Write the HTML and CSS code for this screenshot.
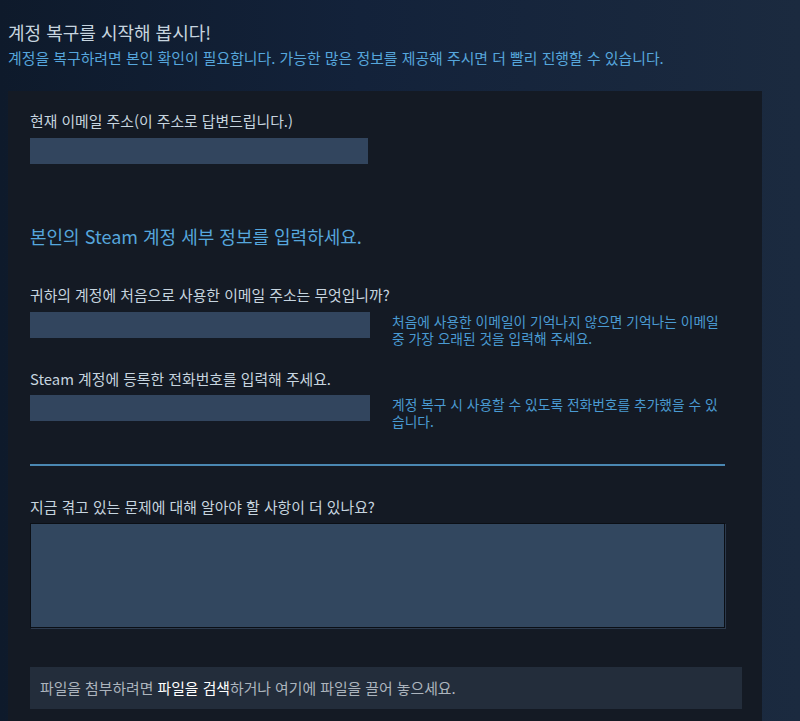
FILE: index.html
```html
<!DOCTYPE html>
<html lang="ko">
<head>
<meta charset="utf-8">
<title>계정 복구</title>
<link rel="stylesheet" href="styles.css">
</head>
<body>
<div class="page">
  <h1 class="title">계정 복구를 시작해 봅시다!</h1>
  <p class="subtitle">계정을 복구하려면 본인 확인이 필요합니다. 가능한 많은 정보를 제공해 주시면 더 빨리 진행할 수 있습니다.</p>

  <div class="panel">
    <div class="field">
      <label class="label" for="email">현재 이메일 주소(이 주소로 답변드립니다.)</label>
      <input class="input input-short" id="email" type="text">
    </div>

    <h2 class="section">본인의 Steam 계정 세부 정보를 입력하세요.</h2>

    <div class="field field-first">
      <label class="label" for="first">귀하의 계정에 처음으로 사용한 이메일 주소는 무엇입니까?</label>
      <div class="row">
        <input class="input" id="first" type="text">
        <p class="hint">처음에 사용한 이메일이 기억나지 않으면 기억나는 이메일 중 가장 오래된 것을 입력해 주세요.</p>
      </div>
    </div>

    <div class="field field-phone">
      <label class="label" for="phone">Steam 계정에 등록한 전화번호를 입력해 주세요.</label>
      <div class="row">
        <input class="input" id="phone" type="text">
        <p class="hint">계정 복구 시 사용할 수 있도록 전화번호를 추가했을 수 있습니다.</p>
      </div>
    </div>

    <div class="divider"></div>

    <div class="field field-more">
      <label class="label" for="more">지금 겪고 있는 문제에 대해 알아야 할 사항이 더 있나요?</label>
      <textarea class="textarea" id="more"></textarea>
    </div>

    <div class="dropzone">파일을 첨부하려면 <span class="browse">파일을 검색</span>하거나 여기에 파일을 끌어 놓으세요.</div>
  </div>
</div>
</body>
</html>
```

FILE: styles.css
```css
* {
  box-sizing: border-box;
}

html, body {
  margin: 0;
  padding: 0;
  height: 100%;
}

body {
  font-family: "Noto Sans CJK KR", "Noto Sans", sans-serif;
  background: linear-gradient(90deg, #0e1a2b 0%, #13223a 45%, #1b2a3f 100%);
  overflow: hidden;
}

.page {
  padding: 20px 0 0 8px;
}

.title {
  margin: 0;
  font-size: 18px;
  line-height: 24px;
  font-weight: 400;
  color: #c6d4df;
}

.subtitle {
  margin: 4px 0 0;
  font-size: 14.9px;
  line-height: 20px;
  color: #56a6dc;
}

.panel {
  margin-top: 23px;
  width: 754px;
  min-height: 640px;
  background: #141a24;
  padding: 21px 20px 0 22px;
}

.field {
  display: flex;
  flex-direction: column;
  gap: 8px;
}

.label {
  font-size: 14.85px;
  line-height: 18px;
  color: #c6d4df;
}

.input {
  display: block;
  width: 340px;
  height: 26px;
  margin: 0;
  padding: 0 6px;
  border: none;
  outline: none;
  background: #32455e;
  color: #fff;
  font: inherit;
}

.input-short {
  width: 338px;
}

.section {
  margin: 60px 0 0;
  font-size: 18px;
  line-height: 24px;
  font-weight: 400;
  color: #56a6dc;
}

.field-first {
  margin-top: 38px;
}

.field-phone {
  margin-top: 23px;
  gap: 7px;
}

.row {
  display: flex;
  align-items: flex-start;
  gap: 22px;
}

.hint {
  margin: 1px 0 0;
  width: 333px;
  font-size: 13.75px;
  line-height: 17px;
  color: #4a9ad2;
}

.divider {
  margin-top: 34px;
  width: 695px;
  height: 2px;
  background: #4a87b2;
}

.field-more {
  margin-top: 32px;
  gap: 7px;
}

.textarea {
  display: block;
  width: 695px;
  height: 105px;
  margin: 0;
  padding: 4px 6px;
  resize: none;
  outline: none;
  border: 1px solid #0b0f15;
  box-shadow: 1px 1px 0 #2c3a4d;
  background: #32475f;
  color: #fff;
  font: inherit;
}

.dropzone {
  margin-top: 39px;
  width: 712px;
  height: 42px;
  padding: 12px 10px 0;
  background: #232d3b;
  font-size: 14.85px;
  line-height: 18px;
  color: #acb4bd;
}

.browse {
  color: #ffffff;
}
```
